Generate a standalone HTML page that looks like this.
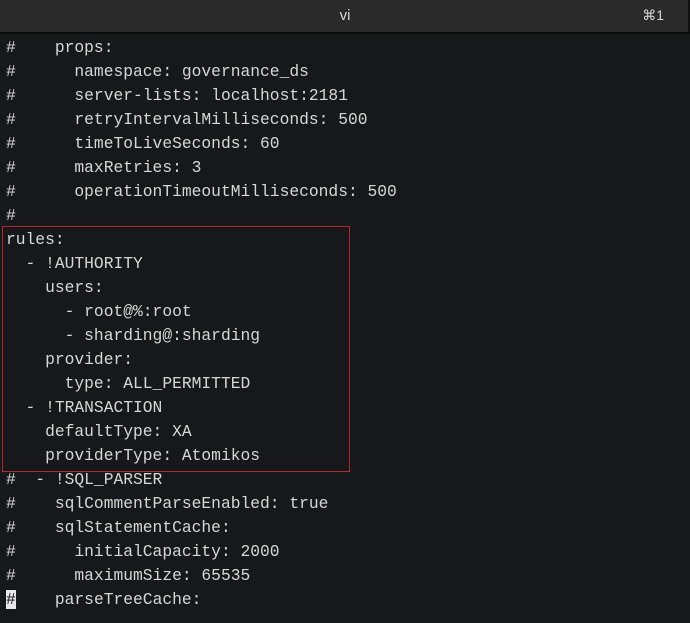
<!DOCTYPE html>
<html><head><meta charset="utf-8"><style>
html,body{margin:0;padding:0;width:690px;height:623px;overflow:hidden;background:#16181c;}
.bar{position:absolute;left:0;top:0;width:690px;height:32px;background:#2a2a2a;border-bottom:2px solid #0c0c0c;color:#d8d8d8;font-family:"Liberation Sans",sans-serif;font-size:15px;}
.bar .t{position:absolute;left:0;width:690px;top:7px;text-align:center;}
.bar .k{position:absolute;right:26px;top:7px;font-size:14px;}
.bar .edge{position:absolute;right:0;top:0;width:2px;height:32px;background:#111;}
pre{position:absolute;left:6px;top:36px;margin:0;font-family:"Liberation Mono",monospace;font-size:16.3px;line-height:24px;color:#d6d6d6;}
.box{position:absolute;left:2px;top:226px;width:346px;height:244px;border:1px solid #b3282b;}
.cur{background:#e8e8e8;color:#111;}
</style></head><body>
<div class="bar"><div class="t">vi</div><div class="k">⌘1</div><div class="edge"></div></div>
<div class="box"></div>
<pre>#    props:
#      namespace: governance_ds
#      server-lists: localhost:2181
#      retryIntervalMilliseconds: 500
#      timeToLiveSeconds: 60
#      maxRetries: 3
#      operationTimeoutMilliseconds: 500
#
rules:
  - !AUTHORITY
    users:
      - root@%:root
      - sharding@:sharding
    provider:
      type: ALL_PERMITTED
  - !TRANSACTION
    defaultType: XA
    providerType: Atomikos
#  - !SQL_PARSER
#    sqlCommentParseEnabled: true
#    sqlStatementCache:
#      initialCapacity: 2000
#      maximumSize: 65535
<span class="cur">#</span>    parseTreeCache:</pre>
</body></html>
